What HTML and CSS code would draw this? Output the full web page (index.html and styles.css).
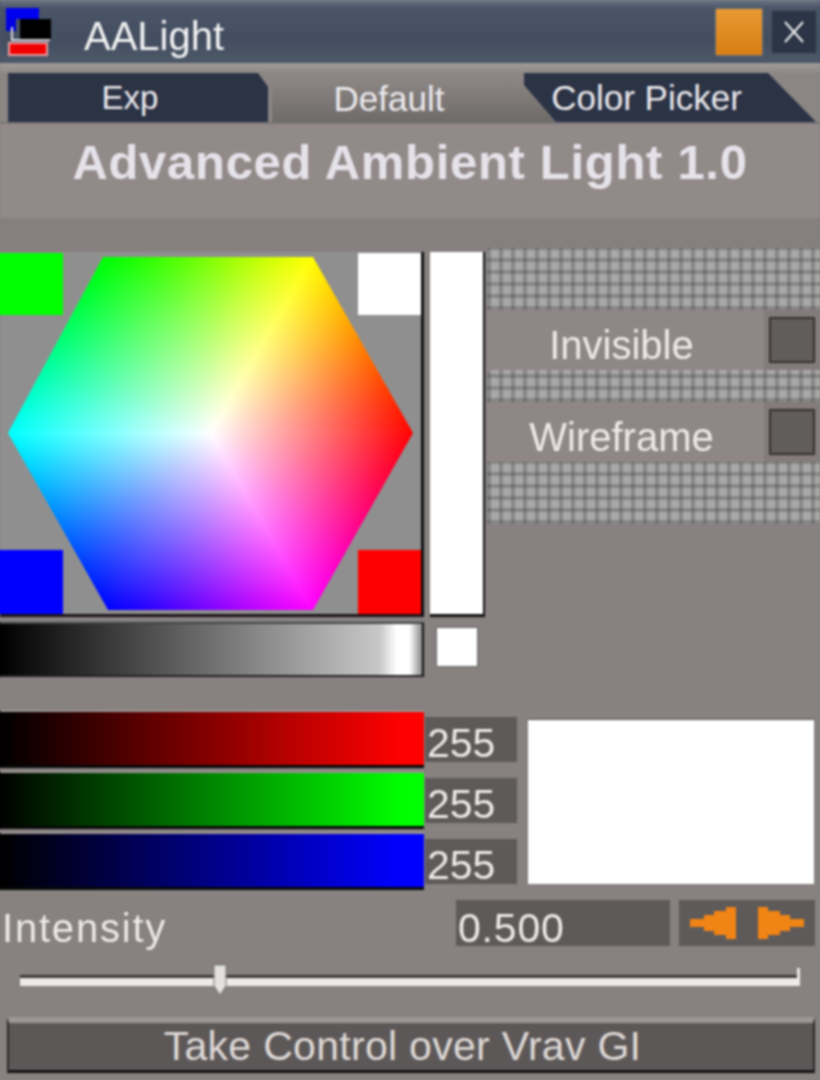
FILE: index.html
```html
<!DOCTYPE html>
<html lang="en">
<head>
    <meta charset="UTF-8">
    <title>AALight</title>
    <link rel="stylesheet" href="styles.css">
</head>
<body>
    <div class="window">
        <div class="titlebar">
            <svg class="app-icon" width="50" height="50" viewBox="0 0 50 50">
                <rect x="0" y="1" width="33" height="11" fill="#0000f0"/>
                <rect x="0" y="12" width="10" height="12" fill="#0000e0"/>
                <path d="M6 20V33H44" fill="none" stroke="#d8d8e0" stroke-width="2"/>
                <rect x="14" y="12" width="31" height="20" fill="#000"/>
                <rect x="3" y="36" width="38" height="12" fill="#f00000" stroke="#e8a0a0" stroke-width="2"/>
            </svg>
            <span class="title">AALight</span>
            <span class="min-btn"></span>
            <span class="close-btn">
                <svg width="24" height="26" viewBox="0 0 24 26"><path d="M3 3L21 23M21 3L3 23" stroke="#f0f0f0" stroke-width="2"/></svg>
            </span>
        </div>

        <div class="tabs">
            <div class="tab tab-exp">Exp</div>
            <div class="tab tab-default">Default</div>
            <div class="tab tab-picker">Color Picker</div>
        </div>

        <div class="heading">Advanced Ambient Light 1.0</div>
        <div class="heading-band"></div>

        <div class="color-area">
            <div class="hex-box">
                <div class="hex">
                    <svg class="hex-white" width="405" height="353" viewBox="0 0 405 353">
                        <defs>
                            <linearGradient id="fadeTop" gradientUnits="userSpaceOnUse" x1="203" y1="176" x2="203" y2="0">
                                <stop offset="0" stop-color="#fff"/><stop offset="1" stop-color="#fff" stop-opacity="0"/>
                            </linearGradient>
                            <linearGradient id="fadeUpperRight" gradientUnits="userSpaceOnUse" x1="203" y1="176" x2="356" y2="89">
                                <stop offset="0" stop-color="#fff"/><stop offset="1" stop-color="#fff" stop-opacity="0"/>
                            </linearGradient>
                            <linearGradient id="fadeLowerRight" gradientUnits="userSpaceOnUse" x1="203" y1="176" x2="356" y2="264">
                                <stop offset="0" stop-color="#fff"/><stop offset="1" stop-color="#fff" stop-opacity="0"/>
                            </linearGradient>
                            <linearGradient id="fadeBottom" gradientUnits="userSpaceOnUse" x1="203" y1="176" x2="203" y2="353">
                                <stop offset="0" stop-color="#fff"/><stop offset="1" stop-color="#fff" stop-opacity="0"/>
                            </linearGradient>
                            <linearGradient id="fadeLowerLeft" gradientUnits="userSpaceOnUse" x1="203" y1="176" x2="50" y2="263">
                                <stop offset="0" stop-color="#fff"/><stop offset="1" stop-color="#fff" stop-opacity="0"/>
                            </linearGradient>
                            <linearGradient id="fadeUpperLeft" gradientUnits="userSpaceOnUse" x1="203" y1="176" x2="50" y2="89">
                                <stop offset="0" stop-color="#fff"/><stop offset="1" stop-color="#fff" stop-opacity="0"/>
                            </linearGradient>
                        </defs>
                        <polygon points="203,176 95,0 305,0" fill="url(#fadeTop)"/>
                        <polygon points="203,176 305,0 405,176" fill="url(#fadeUpperRight)"/>
                        <polygon points="203,176 405,176 305,353" fill="url(#fadeLowerRight)"/>
                        <polygon points="203,176 305,353 100,353" fill="url(#fadeBottom)"/>
                        <polygon points="203,176 100,353 0,176" fill="url(#fadeLowerLeft)"/>
                        <polygon points="203,176 0,176 95,0" fill="url(#fadeUpperLeft)"/>
                    </svg>
                </div>
                <span class="corner corner-green"></span>
                <span class="corner corner-white"></span>
                <span class="corner corner-blue"></span>
                <span class="corner corner-red"></span>
            </div>
            <div class="strip"></div>
            <div class="options">
                <div class="pattern pattern-top"></div>
                <div class="option">
                    <span class="option-label">Invisible</span>
                    <span class="check-wrap"><span class="check"></span></span>
                </div>
                <div class="pattern pattern-mid"></div>
                <div class="option">
                    <span class="option-label">Wireframe</span>
                    <span class="check-wrap"><span class="check"></span></span>
                </div>
                <div class="pattern pattern-bottom"></div>
            </div>
            <div class="value-bar"></div>
            <div class="swatch-cell"><span class="swatch"></span></div>
        </div>

        <div class="rgb-area">
            <div class="rgb-rows">
                <div class="rgb-row">
                    <div class="bar bar-red"></div>
                    <div class="num">255</div>
                </div>
                <div class="rgb-row">
                    <div class="bar bar-green"></div>
                    <div class="num">255</div>
                </div>
                <div class="rgb-row">
                    <div class="bar bar-blue"></div>
                    <div class="num">255</div>
                </div>
            </div>
            <div class="preview"></div>
        </div>

        <div class="intensity">
            <span class="intensity-label">Intensity</span>
            <span class="intensity-value">0.500</span>
            <span class="arrows">
                <svg width="46" height="32" viewBox="0 0 46 32"><path d="M46 0V32H36V28H24V24H14V20H0V12H14V8H24V4H36V0Z" fill="#f08414"/></svg>
                <svg width="46" height="32" viewBox="0 0 46 32"><path d="M0 0V32H10V28H22V24H32V20H46V12H32V8H22V4H10V0Z" fill="#f08414"/></svg>
            </span>
        </div>

        <div class="slider">
            <div class="slider-track"></div>
            <svg class="slider-thumb" width="14" height="32" viewBox="0 0 14 32"><path d="M1 1H13V22L7 31L1 22Z" fill="#e4e2de" stroke="#777" stroke-width="1"/></svg>
        </div>

        <div class="take-control">Take Control over Vrav GI</div>
    </div>
</body>
</html>
```

FILE: styles.css
```css
html, body {
    margin: 0;
    padding: 0;
}

body {
    width: 820px;
    height: 1080px;
    overflow: hidden;
    background: #878180;
    font-family: "Liberation Sans", Arial, sans-serif;
    color: #eeeaea;
}

/* the source is an enlarged low-res capture, so everything is a bit soft */
.window {
    width: 820px;
    height: 1080px;
    display: flex;
    flex-direction: column;
    filter: blur(0.8px);
}

/* title bar */
.titlebar {
    height: 63px;
    display: flex;
    align-items: center;
    position: relative;
    background: linear-gradient(#6a7686 0, #4a5567 8px, #434e60 40px, #4d5869 100%);
    box-shadow: -6px 0 0 #4a5567, 6px 0 0 #4a5567;
}

.app-icon {
    margin-left: 6px;
}

.title {
    margin-left: 28px;
    padding-top: 10px;
    font-size: 40px;
    color: #f2f2f2;
}

.min-btn {
    margin-left: auto;
    width: 46px;
    height: 46px;
    background: linear-gradient(#e89a34, #d87e14);
    box-shadow: 0 0 2px #a9a39c;
}

.close-btn {
    margin: 0 4px 0 10px;
    width: 44px;
    height: 42px;
    display: flex;
    align-items: center;
    justify-content: center;
    background: #2c3545;
}

/* tabs */
.tabs {
    height: 61px;
    padding: 10px 4px 0 8px;
    box-sizing: border-box;
    display: flex;
    position: relative;
    background: linear-gradient(#a09b98, #8b8583 12px);
    border-bottom: 2px solid #77747a;
}

.tab {
    height: 49px;
    display: flex;
    align-items: center;
    justify-content: center;
    font-size: 35px;
    color: #eceaee;
}

.tab-exp {
    width: 260px;
    background: #2b3345;
    clip-path: polygon(0 0, 250px 0, 260px 14px, 260px 100%, 0 100%);
    padding-right: 16px;
    box-sizing: border-box;
    font-size: 33px;
}

.tab-default {
    width: 284px;
    margin-left: 4px;
    margin-top: 3px;
    height: 46px;
    background: linear-gradient(#8d8885, #6f6b69);
    padding-right: 50px;
    box-sizing: border-box;
}

.tab-picker {
    width: 292px;
    margin-left: -32px;
    background: #2b3345;
    clip-path: polygon(0 0, 244px 0, 292px 100%, 32px 100%, 0 12px);
    padding-right: 47px;
    box-sizing: border-box;
}

/* heading */
.heading {
    height: 94px;
    padding-top: 10px;
    box-sizing: border-box;
    text-align: center;
    font-size: 49px;
    font-weight: bold;
    letter-spacing: 0.7px;
    color: #e6e2ea;
    background: #928a88;
}

.heading-band {
    height: 30px;
    background: #857f7d;
}

/* hexagon, strip and options */
.color-area {
    display: grid;
    grid-template-columns: 424px 63px 333px;
    grid-template-rows: 369px 60px;
}

.hex-box {
    position: relative;
    margin-top: 4px;
    background: #8f8f8f;
    border-right: 3px solid #111;
    border-bottom: 3px solid #1c1418;
    box-sizing: border-box;
}

.hex {
    position: absolute;
    left: 8px;
    top: 5px;
    width: 405px;
    height: 353px;
    clip-path: polygon(95px 0, 305px 0, 405px 176px, 305px 353px, 100px 353px, 0 176px);
    background: conic-gradient(from 30deg at 50% 50%, #ffff00 0deg, #ff0000 60deg, #ff00ff 120deg, #0000ff 180deg, #00ffff 240deg, #00ff00 300deg, #ffff00 360deg);
}

.hex-white {
    display: block;
    shape-rendering: crispEdges;
}

.corner {
    position: absolute;
    width: 63px;
    height: 62px;
}

.corner-green { left: 0; top: 1px; background: #00ff00; box-shadow: -6px 0 0 #00ff00; }
.corner-white { right: 0; top: 1px; background: #fff; }
.corner-blue { left: 0; bottom: 0; height: 64px; background: #0000ff; box-shadow: -6px 0 0 #0000ff; }
.corner-red { right: 0; bottom: 0; height: 64px; background: #ff0000; }

.strip {
    margin: 4px 0 0 6px;
    width: 55px;
    height: 365px;
    background: #fff;
    border-right: 2px solid #111;
    border-bottom: 3px solid #111;
    box-sizing: border-box;
}

.options {
    grid-row: span 2;
    display: flex;
    flex-direction: column;
    height: 277px;
}

.pattern {
    background-color: #a8a8a8;
    background-image:
        repeating-linear-gradient(90deg, rgba(60, 60, 60, 0.3) 0 4px, transparent 4px 12px),
        repeating-linear-gradient(0deg, rgba(60, 60, 60, 0.3) 0 4px, transparent 4px 12px);
}

.pattern-top { height: 62px; }
.pattern-mid { height: 32px; }
.pattern-bottom { height: 62px; }

.option {
    height: 60px;
    display: flex;
    align-items: center;
    background: #8f8785;
}

.option-label {
    flex: 1;
    padding: 10px 8px 0 0;
    text-align: center;
    font-size: 40px;
}

.check-wrap {
    width: 56px;
    height: 100%;
    display: flex;
    align-items: center;
    justify-content: center;
    background: #847c7b;
}

.check {
    width: 42px;
    height: 42px;
    background: #625d5d;
    border: 2px solid #342e30;
}

.value-bar {
    margin-top: 5px;
    height: 55px;
    background: linear-gradient(90deg, #000, #c8c8c8 90%, #fff 94%, #fff 97%, #888);
    border-top: 2px solid #444;
    border-right: 2px solid #111;
    border-bottom: 2px solid #222;
    box-sizing: border-box;
    box-shadow: -6px 0 0 #000;
}

.swatch-cell {
    padding: 10px 0 0 12px;
}

.swatch {
    display: block;
    width: 40px;
    height: 38px;
    background: #fff;
    border: 1px solid #666;
}

/* rgb sliders */
.rgb-area {
    display: flex;
    margin-top: 33px;
}

.rgb-rows {
    width: 517px;
    display: flex;
    flex-direction: column;
    gap: 3px;
}

.rgb-row {
    height: 58px;
    display: flex;
    align-items: center;
}

.bar {
    width: 424px;
    height: 100%;
    box-sizing: border-box;
    border-bottom: 3px solid #080808;
    border-top: 2px solid #9a9492;
    box-shadow: -6px 0 0 #000;
}

.bar-red { background: linear-gradient(90deg, #000, #ff0000 95%); }
.bar-green { background: linear-gradient(90deg, #000, #00ff00 95%); }
.bar-blue { background: linear-gradient(90deg, #000, #0000ff 95%); }

.num {
    width: 92px;
    height: 45px;
    margin-left: 1px;
    background: #5f5a5a;
    display: flex;
    align-items: center;
    font-size: 41px;
    padding: 9px 0 0 2px;
    box-sizing: border-box;
}

.preview {
    width: 286px;
    height: 164px;
    margin: 9px 0 0 11px;
    background: #fff;
    border-top: 1px solid #555;
}

/* intensity */
.intensity {
    height: 46px;
    margin-top: 10px;
    display: flex;
    align-items: center;
}

.intensity-label {
    margin-left: 2px;
    padding-top: 10px;
    font-size: 40px;
    letter-spacing: 1.8px;
}

.intensity-value {
    margin-left: auto;
    width: 214px;
    height: 46px;
    padding: 10px 0 0 2px;
    box-sizing: border-box;
    background: #5f5a5a;
    display: flex;
    align-items: center;
    font-size: 41px;
    letter-spacing: 0.8px;
}

.arrows {
    width: 136px;
    height: 46px;
    margin: 0 5px 0 9px;
    background: #5f5a5a;
    display: flex;
    align-items: center;
    justify-content: center;
    gap: 22px;
}

/* slider */
.slider {
    height: 32px;
    margin-top: 18px;
    position: relative;
    display: flex;
    align-items: center;
    padding: 0 20px;
}

.slider-track {
    width: 780px;
    height: 11px;
    background: #ecebe6;
    border-top: 3px solid #3e3a3a;
    box-sizing: border-box;
    position: relative;
}

.slider-track::after {
    content: "";
    position: absolute;
    right: 0;
    top: -10px;
    width: 3px;
    height: 18px;
    background: #ecebe6;
}

.slider-thumb {
    position: absolute;
    left: 213px;
    top: 0;
}

/* bottom button */
.take-control {
    height: 47px;
    margin: 21px 5px 0 7px;
    padding-right: 17px;
    background: #5d5858;
    border-top: 6px solid #9b9694;
    border-bottom: 3px solid #141012;
    border-left: 2px solid #2c2828;
    border-right: 2px solid #2c2828;
    display: flex;
    align-items: center;
    justify-content: center;
    font-size: 41px;
    letter-spacing: 0.3px;
    color: #ded9d6;
}
```
